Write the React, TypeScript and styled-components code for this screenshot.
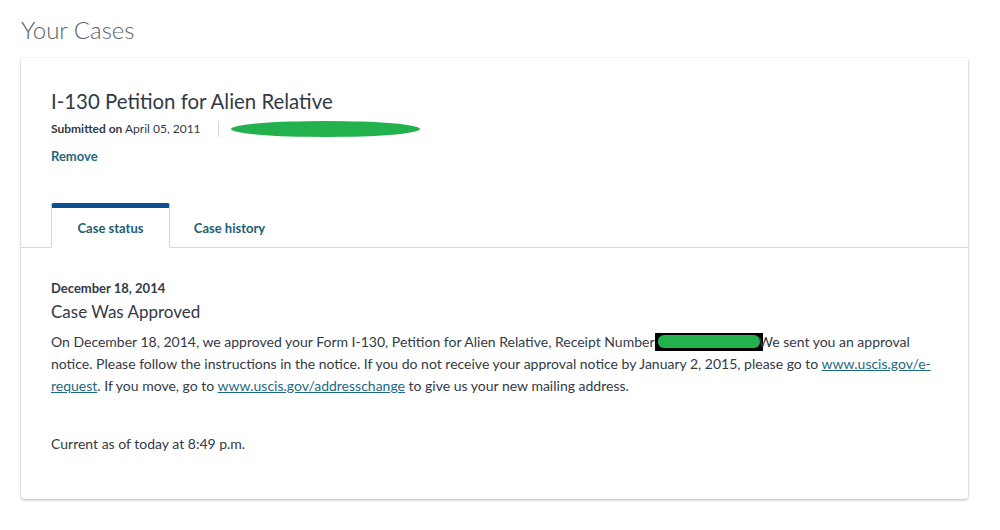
import React from 'react';
import styled, { createGlobalStyle } from 'styled-components';

const GlobalStyle = createGlobalStyle`
  html, body {
    margin: 0;
    padding: 0;
    background-color: #ffffff;
    font-family: "Lato", "Open Sans", sans-serif;
    color: #323a45;
  }
`;

const Page = styled.div`
  padding: 14px 32px 30px 21px;
`;

const PageTitle = styled.h1`
  margin: 0;
  font-size: 24px;
  line-height: 32px;
  font-weight: 300;
  color: #5b616b;
`;

const Card = styled.section`
  margin-top: 12px;
  background-color: #fff;
  border-radius: 3px;
  box-shadow: 0 1px 3px rgba(0, 0, 0, 0.28), 0 0 2px rgba(0, 0, 0, 0.06);
`;

const CardHeader = styled.div`
  padding: 30px 30px 0 30px;
`;

const FormTitle = styled.h2`
  margin: 0;
  font-size: 20.4px;
  line-height: 26px;
  font-weight: 400;
  color: #323a45;
`;

const MetaRow = styled.div`
  display: flex;
  align-items: center;
  margin-top: 6px;
  font-size: 12px;
  line-height: 18px;
`;

const MetaLabel = styled.strong`
  font-weight: 700;
`;

const MetaDivider = styled.span`
  width: 1px;
  height: 16px;
  background-color: #d6d7d9;
  margin: 0 12px 0 17px;
`;

const Ellipse = styled.span`
  display: inline-block;
  width: 189px;
  height: 16px;
  background-color: #22b14c;
  border-radius: 50%;
`;

const ReceiptBlock = styled.span`
  display: inline-block;
  box-sizing: border-box;
  width: 108px;
  height: 18px;
  padding: 2px 3px 3px 3px;
  margin-right: -4px;
  vertical-align: -4px;
  background-color: #000;
`;

const ReceiptFill = styled.span`
  display: block;
  height: 100%;
  background-color: #22b14c;
  border-radius: 6px;
`;

const RemoveLink = styled.a`
  display: inline-block;
  margin-top: 10px;
  font-size: 13px;
  font-weight: 700;
  color: #1e6a83;
  text-decoration: none;
`;

const TabBar = styled.div`
  display: flex;
  margin-top: 39px;
  padding-left: 30px;
  border-bottom: 1px solid #d6d7d9;
`;

const Tab = styled.div<{ $active?: boolean }>`
  width: 117px;
  height: 39px;
  margin-bottom: ${p => (p.$active ? '-1px' : '0')};
  box-sizing: content-box;
  display: flex;
  align-items: center;
  justify-content: center;
  font-size: 13px;
  font-weight: 700;
  color: #1e5f73;
  background-color: ${p => (p.$active ? '#fff' : 'transparent')};
  border-top: 5px solid ${p => (p.$active ? '#0e4f8f' : 'transparent')};
  border-left: 1px solid ${p => (p.$active ? '#d6d7d9' : 'transparent')};
  border-right: 1px solid ${p => (p.$active ? '#d6d7d9' : 'transparent')};
  border-bottom: ${p => (p.$active ? '1px solid #fff' : '0')};
  border-radius: 3px 3px 0 0;
`;

const CardBody = styled.div`
  padding: 31px 30px 44px 30px;
`;

const StatusDate = styled.div`
  font-size: 13px;
  line-height: 18px;
  font-weight: 700;
`;

const StatusTitle = styled.h3`
  margin: 3px 0 0 0;
  font-size: 17px;
  line-height: 24px;
  font-weight: 400;
`;

const Paragraph = styled.p`
  margin: 7px 0 0 0;
  font-size: 14px;
  line-height: 22px;
  max-width: 890px;
`;

const TextLink = styled.a`
  color: #1e6a83;
  text-decoration: underline;
`;

const Footnote = styled.p`
  margin: 36px 0 0 0;
  font-size: 14px;
  line-height: 22px;
`;

export default function App() {
  return (
    <Page>
      <GlobalStyle />
      <PageTitle>Your Cases</PageTitle>
      <Card>
        <CardHeader>
          <FormTitle>I-130 Petition for Alien Relative</FormTitle>
          <MetaRow>
            <span>
              <MetaLabel>Submitted on</MetaLabel> April 05, 2011
            </span>
            <MetaDivider />
            <Ellipse />
          </MetaRow>
          <RemoveLink href="#">Remove</RemoveLink>
        </CardHeader>
        <TabBar>
          <Tab $active>Case status</Tab>
          <Tab>Case history</Tab>
        </TabBar>
        <CardBody>
          <StatusDate>December 18, 2014</StatusDate>
          <StatusTitle>Case Was Approved</StatusTitle>
          <Paragraph>
            On December 18, 2014, we approved your Form I-130, Petition for Alien Relative, Receipt Number
            <ReceiptBlock>
              <ReceiptFill />
            </ReceiptBlock>
            We sent you an approval notice. Please follow the instructions in the notice. If you do not
            receive your approval notice by January 2, 2015, please go to{' '}
            <TextLink href="#">www.uscis.gov/e-request</TextLink>. If you move, go to{' '}
            <TextLink href="#">www.uscis.gov/addresschange</TextLink> to give us your new mailing address.
          </Paragraph>
          <Footnote>Current as of today at 8:49 p.m.</Footnote>
        </CardBody>
      </Card>
    </Page>
  );
}
